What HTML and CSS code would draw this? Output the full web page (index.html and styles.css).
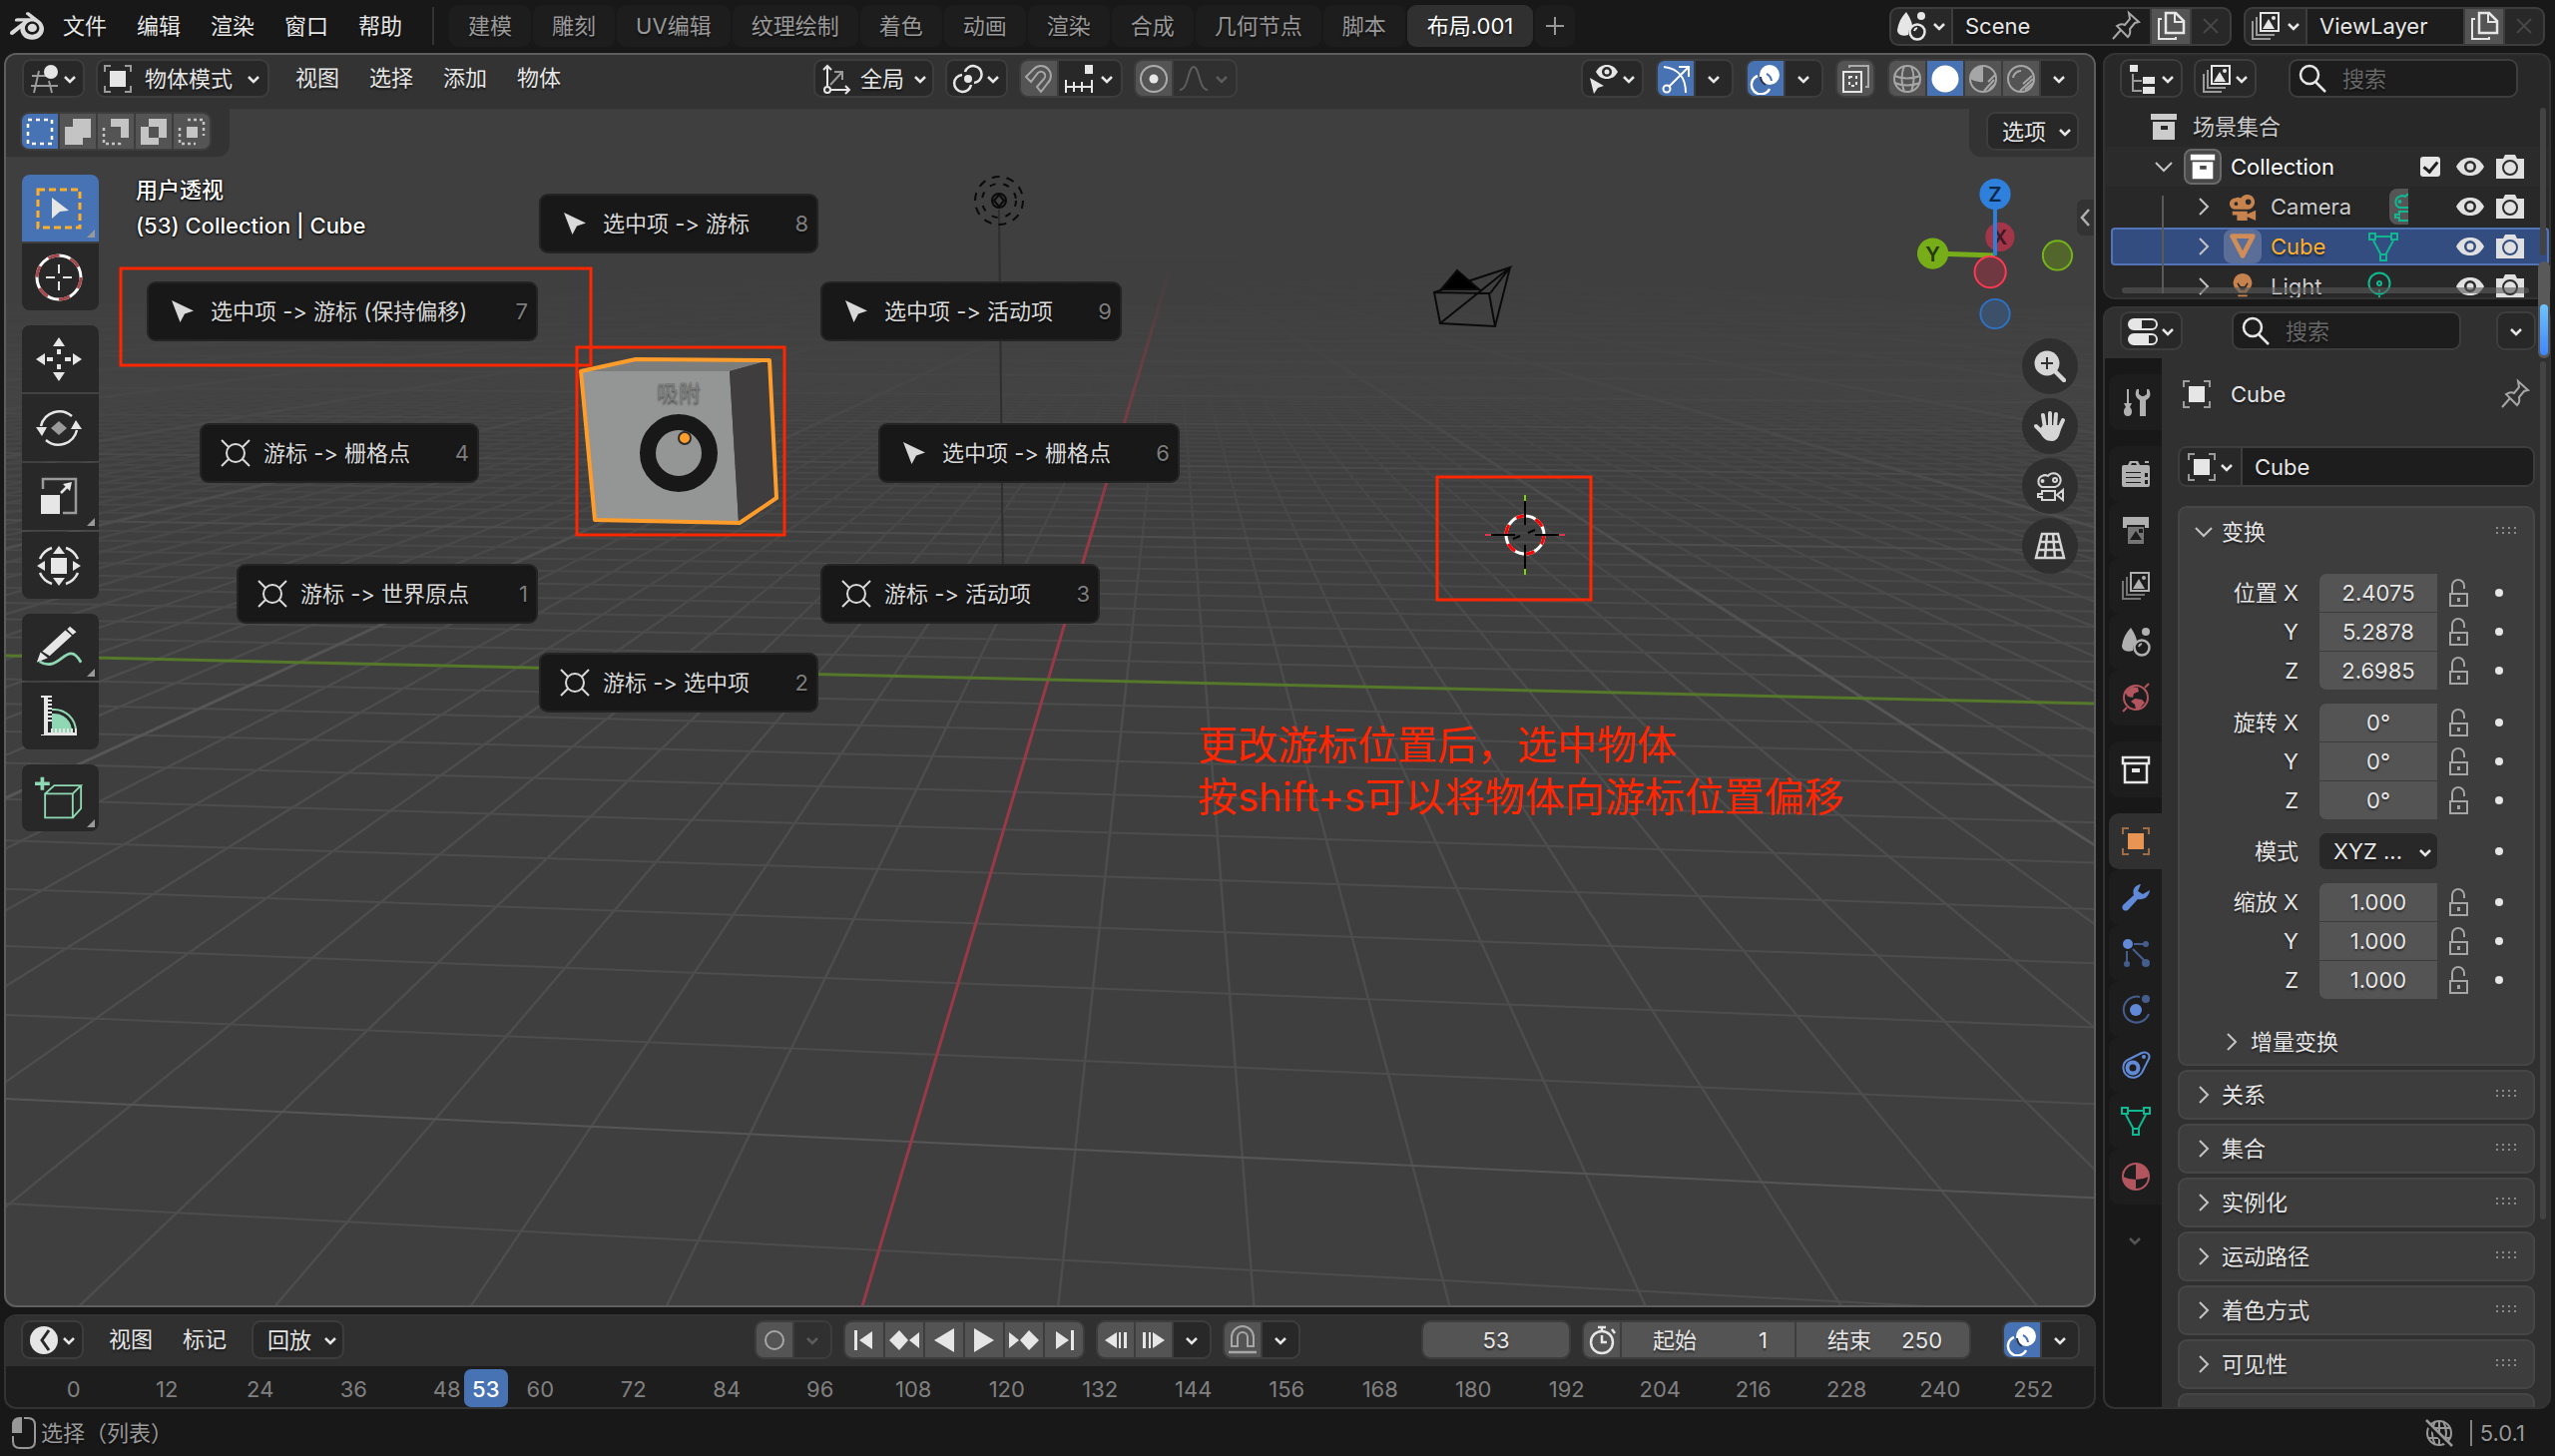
FILE: index.html
```html
<!DOCTYPE html>
<html lang="zh-CN">
<head>
<meta charset="utf-8">
<title>Blender</title>
<link rel="stylesheet" href="styles.css">
</head>
<body>
<svg class="sprite" aria-hidden="true">
  <symbol id="logo" viewBox="0 0 24 24"><path fill="currentColor" fill-rule="evenodd" d="M12.51 13.214c.046-.8.438-1.506 1.03-2.006a3.424 3.424 0 0 1 2.212-.79c.85 0 1.631.3 2.211.79.592.5.983 1.206 1.028 2.005.045.823-.285 1.586-.865 2.153a3.389 3.389 0 0 1-2.374.938 3.393 3.393 0 0 1-2.376-.938c-.58-.567-.91-1.33-.865-2.152M7.35 14.831c.006.314.106.922.256 1.398a7.372 7.372 0 0 0 1.593 2.757 8.227 8.227 0 0 0 2.787 2.001 8.947 8.947 0 0 0 3.66.76 8.964 8.964 0 0 0 3.657-.772 8.285 8.285 0 0 0 2.785-2.01 7.428 7.428 0 0 0 1.592-2.762 6.964 6.964 0 0 0 .25-3.074 7.123 7.123 0 0 0-1.016-2.779 7.764 7.764 0 0 0-1.852-2.043h.002L13.566 2.55l-.02-.015c-.492-.378-1.319-.376-1.86.002-.547.382-.609 1.015-.123 1.415l-.001.001 3.126 2.543-9.53.01h-.013c-.788.001-1.545.518-1.695 1.172-.154.665.38 1.217 1.2 1.22V8.9l4.83-.01-8.62 6.617-.034.025c-.813.622-1.075 1.658-.563 2.315.52.667 1.625.668 2.447.004L7.414 14s-.069.52-.063.831zm12.09 1.741c-.97.988-2.326 1.548-3.795 1.55-1.47.004-2.827-.552-3.797-1.538a4.51 4.51 0 0 1-1.036-1.622 4.282 4.282 0 0 1 .282-3.519 4.702 4.702 0 0 1 1.153-1.371c.942-.768 2.141-1.183 3.396-1.185 1.256-.002 2.455.41 3.398 1.175.48.391.87.854 1.152 1.367a4.28 4.28 0 0 1 .522 1.706 4.236 4.236 0 0 1-.239 1.811 4.54 4.54 0 0 1-1.035 1.626"/></symbol>
  <symbol id="down" viewBox="0 0 16 16"><path class="s3" d="M3 6l5 5 5-5"/></symbol>
  <symbol id="fold-open" viewBox="0 0 20 20"><path class="s" d="M2 6l8 8 8-8"/></symbol>
  <symbol id="fold-shut" viewBox="0 0 20 20"><path class="s" d="M6 2l8 8-8 8"/></symbol>
  <symbol id="left" viewBox="0 0 16 24"><path class="s3" d="M12 4L5 12l7 8"/></symbol>
  <symbol id="cross" viewBox="0 0 32 32"><path class="s" d="M9 9l14 14M23 9L9 23"/></symbol>
  <symbol id="plus" viewBox="0 0 32 32"><path class="s" d="M16 7v18M7 16h18"/></symbol>
  <symbol id="view3d" viewBox="0 0 32 32"><circle cx="22" cy="9" r="7" class="f"/><path class="s dim" d="M3 13h10M2 23h27M10 8L5 30M20 18l3 12M5 13h12"/></symbol>
  <symbol id="object" viewBox="0 0 32 32"><path class="f" d="M8 8h16v16H8z"/><path class="s dim" d="M3 9V3h6M23 3h6v6M29 23v6h-6M9 29H3v-6"/></symbol>
  <symbol id="axes" viewBox="0 0 32 32"><path class="s" d="M7 23V3M3 7l4-4 4 4M10 27h19M25 23l4 4-4 4"/><circle cx="7" cy="27" r="3" class="s"/><path class="s dim" d="M10 22L22 9M14 9h8v8"/></symbol>
  <symbol id="pivot" viewBox="0 0 32 32"><circle cx="16" cy="16" r="4" class="f"/><path class="s3" d="M13 9a8.500 8.500 0 1 1 9 11M10 12a8.500 8.500 0 1 0 9 10"/></symbol>
  <symbol id="magnet" viewBox="0 0 32 32"><path class="s" d="M3 14L11 6a9 9 0 0 1 14 14l-7 9-4-5 7-8a4 4 0 0 0-6-6l-7 9z"/></symbol>
  <symbol id="increment" viewBox="0 0 32 32"><path class="f" d="M22 2h8v9h-8z"/><path class="s" d="M3 17v13M3 24h26M11 19v10M19 19v10M29 17v13"/></symbol>
  <symbol id="propedit" viewBox="0 0 32 32"><circle cx="16" cy="16" r="13" class="s dim"/><circle cx="16" cy="16" r="4.500" class="f"/></symbol>
  <symbol id="falloff" viewBox="0 0 32 32"><path class="s" d="M2 27c9 0 8-23 14-23s5 23 14 23"/></symbol>
  <symbol id="visible" viewBox="0 0 32 32"><path class="f" fill-rule="evenodd" d="M8 9c3-5 6-7 11-7s8 2 11 7c-3 5-6 7-11 7S11 14 8 9zm11-5a5 5 0 1 0 0 10 5 5 0 0 0 0-10z"/><circle cx="19" cy="9" r="2.500" class="f"/><path class="f" d="M2 15l14 8-6 2-4 6z"/></symbol>
  <symbol id="gizmo" viewBox="0 0 32 32"><path class="s" d="M4 4c15 2 22 10 22 26M9 24L28 5M19 4h10v10"/><circle cx="7" cy="26" r="3.500" class="s"/></symbol>
  <symbol id="overlay" viewBox="0 0 32 32"><circle cx="20" cy="12" r="10" class="f"/><path class="s3" d="M8 13a9.500 9.500 0 1 0 12 13"/><path d="M16 22a10 10 0 0 1-5-8" stroke="#28334a" stroke-width="2" fill="none"/><path d="M17 11a9 9 0 0 1 5 7" stroke="#4772b3" stroke-width="2" fill="none"/></symbol>
  <symbol id="xray" viewBox="0 0 32 32"><path class="s" d="M4 9h18v20H4z"/><path class="s dim" d="M10 5V3h19v21h-3"/><path class="s" stroke-dasharray="3 3" d="M10 14h7v9h-7z"/></symbol>
  <symbol id="wire" viewBox="0 0 32 32"><g class="s"><circle cx="16" cy="16" r="13"/><path d="M3 13q13 5 26 0M3 20q13 5 26 0M13 3q-5 13 0 26M20 3q5 13 0 26"/></g></symbol>
  <symbol id="solid" viewBox="0 0 32 32"><circle cx="16" cy="16" r="13.500" class="f"/></symbol>
  <symbol id="matprev" viewBox="0 0 32 32"><circle cx="16" cy="16" r="13" class="s"/><path class="f" d="M16 3a13 13 0 0 0-13 13q6 4 13 3z"/><path class="s" d="M17 28l10-11M22 27l6-6M21 19l7-7"/></symbol>
  <symbol id="rendered" viewBox="0 0 32 32"><circle cx="16" cy="16" r="13" class="s"/><path class="s" d="M8 15a8 8 0 0 1 8-7"/><path class="s" d="M15 28l13-12M20 27l8-7M18 21l9-8"/></symbol>
  <symbol id="scene" viewBox="0 0 32 32"><path class="f" d="M11 2c4 6 6 11 6 14a11 11 0 0 0-4 9c-7 2-11-1-11-5C3 13 6 7 11 2z"/><circle cx="26" cy="6" r="4" class="f"/><circle cx="22" cy="22" r="7.500" class="s3"/><path class="s" d="M19 21a4 4 0 0 1 3-3"/></symbol>
  <symbol id="layers" viewBox="0 0 32 32"><path class="s" d="M11 3h18v18H11z"/><path class="f" d="M13 19l6-10 6 10z"/><circle cx="24" cy="8" r="2" class="f"/><path class="s dim" d="M7 7v18h18M3 11v18h18"/></symbol>
  <symbol id="pin" viewBox="0 0 32 32"><path class="s" d="M19 3l10 9-4 1-5 6c1 4 0 6-2 8L7 16c3-2 6-2 8-1l5-6zM11 20l-8 9"/></symbol>
  <symbol id="dup" viewBox="0 0 32 32"><path class="s3" d="M11 3h10l8 8v12H11z"/><path class="s" d="M20 4v8h8M7 9H4v20h17v-2"/></symbol>
  <symbol id="outliner" viewBox="0 0 32 32"><path class="f" d="M3 2h8v7H3zM16 14h12v7H16zM16 24h12v7H16z"/><path class="s dim" d="M6 11v17h9M6 18h9"/></symbol>
  <symbol id="search" viewBox="0 0 32 32"><circle cx="13" cy="12" r="9" class="s3"/><path class="s3" d="M19 19l10 10"/></symbol>
  <symbol id="box" viewBox="0 0 32 32"><path class="f" fill-rule="evenodd" d="M3 3h26v6H3zM5 11h22v18H5zm8 4v4h7v-4z"/></symbol>
  <symbol id="box-line" viewBox="0 0 32 32"><path class="s3" d="M3 4h26v6H3zM5 10v19h22V10"/><path class="f" d="M12 15h8v4h-8z"/></symbol>
  <symbol id="eye" viewBox="0 0 32 32"><path class="f" fill-rule="evenodd" d="M2 16C6 9 10 7 16 7s10 2 14 9c-4 7-8 9-14 9S6 23 2 16zm14-6a6 6 0 1 0 0 12 6 6 0 0 0 0-12z"/><circle cx="16" cy="16" r="3.500" class="f"/></symbol>
  <symbol id="photo" viewBox="0 0 32 32"><path class="f" fill-rule="evenodd" d="M2 8h7l2-4h10l2 4h7v20H2zm14 1a8 8 0 1 0 0 16 8 8 0 0 0 0-16zm0 2a6 6 0 1 1 0 12 6 6 0 0 1 0-12z"/><circle cx="16" cy="17" r="4" class="f"/></symbol>
  <symbol id="camera" viewBox="0 0 32 32"><path class="f" fill-rule="evenodd" d="M8 7a6 6 0 0 1 6 0 8 8 0 1 1 8 12H8A6 6 0 0 1 8 7zm1 4a2 2 0 1 0 0 4 2 2 0 0 0 0-4zm13-3a3 3 0 1 0 0 6 3 3 0 0 0 0-6zM5 21h16v3l9-4v11l-9-4v4H10v-6H5z"/></symbol>
  <symbol id="camera-line" viewBox="0 0 32 32"><g class="s"><path d="M8 6a6 6 0 0 1 6 0 7 7 0 1 1 7 11H8A6 6 0 0 1 8 6z"/><circle cx="8.500" cy="11" r="1"/><circle cx="21" cy="10" r="2"/><path d="M4 24h4v-3h13v9H8v-3H4zM29 20v10l-6-5z"/></g></symbol>
  <symbol id="tri" viewBox="0 0 32 32"><path fill="none" stroke="currentColor" stroke-width="5" stroke-linejoin="round" d="M5 5h22L16 26z"/></symbol>
  <symbol id="mesh" viewBox="0 0 32 32"><path class="s" d="M9 6h14M6 10l8 15M26 10l-8 15M2 3h6v6H2zM24 3h6v6h-6zM13 24h6v6h-6z"/></symbol>
  <symbol id="bulb" viewBox="0 0 32 32"><path class="f" fill-rule="evenodd" d="M16 2a10 10 0 0 0-7 17l3 4h8l3-4A10 10 0 0 0 16 2zm-5 10l3 4h4l3-4 1 1-4 7h-4l-4-7z"/><path class="f" d="M11 25h10v2H11zM12 29h8v2h-8z"/></symbol>
  <symbol id="lightdata" viewBox="0 0 32 32"><circle cx="16" cy="13" r="10.500" class="s"/><circle cx="16" cy="13" r="2" class="s"/><path class="s" stroke-dasharray="3 3" d="M16 19v12"/></symbol>
  <symbol id="props" viewBox="0 0 32 32"><path fill-rule="evenodd" class="f" d="M7 3h18a6 6 0 0 1 0 12H7A6 6 0 0 1 7 3zm8 2v8h10a4 4 0 0 0 0-8zM7 18h18a6 6 0 0 1 0 12H7a6 6 0 0 1 0-12zm15 2v8h3a4 4 0 0 0 0-8z"/></symbol>
  <symbol id="tool" viewBox="0 0 32 32"><path class="f" d="M7 3h2v14H7zM4 17h8l-2 4c3 2 3 9-2 9s-5-7-2-9zM17 3c-3 6 0 9 3 11v16h6V14c4-2 6-5 3-11l-2 0v5l-3 2h-2l-3-2V3z"/></symbol>
  <symbol id="render" viewBox="0 0 32 32"><path class="f" fill-rule="evenodd" d="M4 7h4l2-4h8l2 4h8q2 0 2 2v18q0 2-2 2H4q-2 0-2-2V9q0-2 2-2zm7 0h6l-1-2h-4zM6 14v1h15v-1zm0 5v1h15v-1zm0 5v1h15v-1zm19-9v4h3v-4zm0 7v4h3v-4z"/><path class="f" d="M25 3h4v2h-4z"/></symbol>
  <symbol id="output" viewBox="0 0 32 32"><path class="f" d="M3 3h26v11h-4v-3H7v3H3z"/><path class="f dim" fill-rule="evenodd" d="M8 13h16v17H8zm2 13h12l-6-9zm9-11v4h4v-4z"/></symbol>
  <symbol id="world" viewBox="0 0 32 32"><circle cx="16" cy="16" r="12" class="s"/><path class="s" d="M25 6l4-4M3 30l4-4"/><path class="f" d="M6 10l6-5 6 1 1 4-5 2-1 4-5-1-2-3zM15 17l7 1 3 3-6 7-3 0-1-5-4-3z"/></symbol>
  <symbol id="wrench" viewBox="0 0 32 32"><path class="f" d="M21 3c-6 1-9 6-7 11L3 24c-2 3 1 7 5 5l10-11c6 1 11-2 12-9l-7 4-5-3z"/></symbol>
  <symbol id="particles" viewBox="0 0 32 32"><circle cx="8" cy="7" r="5" class="f"/><g class="dim"><circle cx="26" cy="7" r="3" class="f"/><circle cx="26" cy="26" r="4" class="f"/><circle cx="7" cy="27" r="3" class="f"/><path class="s" d="M14 7h10M13 12l12 12M7 14v11"/></g></symbol>
  <symbol id="physics" viewBox="0 0 32 32"><circle cx="16" cy="17" r="6" class="f"/><g class="dim"><circle cx="26" cy="6" r="4" class="f"/><path class="s" d="M20 4a13 13 0 1 0 9 17"/></g></symbol>
  <symbol id="constraint" viewBox="0 0 32 32"><path class="s" d="M22 4c5-2 9 2 7 6l-7 14C15 34 0 27 4 15c1-2 3-4 6-5z"/><circle cx="13" cy="19" r="5.500" fill="none" stroke="currentColor" stroke-width="4"/><circle cx="24" cy="8" r="2" class="f"/></symbol>
  <symbol id="material" viewBox="0 0 32 32"><circle cx="16" cy="16" r="13" class="s"/><path class="f" d="M16 3a13 13 0 0 1 13 13q-6 3-13 3zM3 16q6 3 13 3v10A13 13 0 0 1 3 16z"/></symbol>
  <symbol id="lock" viewBox="0 0 24 32"><path class="s" d="M4 17h17v12H4zM6 17V9a6 6 0 0 1 12 0v3"/><path class="f" d="M11 21h3v4h-3z"/></symbol>
  <symbol id="grip" viewBox="0 0 24 10"><path class="f" d="M1 0h2v2H1zM7 0h2v2H7zM13 0h2v2h-2zM19 0h2v2h-2zM1 5h2v2H1zM7 5h2v2H7zM13 5h2v2h-2zM19 5h2v2h-2z"/></symbol>
  <symbol id="pie-arrow" viewBox="0 0 32 32"><path class="f" d="M5 5l22 10.500L18 18.500 13.500 27z"/></symbol>
  <symbol id="pie-cursor" viewBox="0 0 32 32"><circle cx="16" cy="16" r="9" class="s"/><path class="s" d="M2 3l7 7M30 3l-7 7M2 29l7-7M30 29l-7-7"/></symbol>
  <symbol id="clock" viewBox="0 0 32 32"><circle cx="16" cy="16" r="14" class="f"/><path d="M21 6l-7 10 7 10" fill="none" stroke="#282828" stroke-width="3"/></symbol>
  <symbol id="record" viewBox="0 0 32 32"><circle cx="16" cy="16" r="9" class="s"/></symbol>
  <symbol id="first" viewBox="0 0 32 32"><path class="f" d="M6 6h3v20H6zM24 7v18L11 16z"/></symbol>
  <symbol id="last" viewBox="0 0 32 32"><path class="f" d="M23 6h3v20h-3zM8 7v18l13-9z"/></symbol>
  <symbol id="prevkey" viewBox="0 0 32 32"><path class="f" d="M1 16l10-10 9 10-9 10zM31 8v16l-10-8z"/></symbol>
  <symbol id="nextkey" viewBox="0 0 32 32"><path class="f" d="M31 16L21 6l-9 10 9 10zM1 8v16l10-8z"/></symbol>
  <symbol id="playback" viewBox="0 0 32 32"><path class="f" d="M26 4v24L6 16z"/></symbol>
  <symbol id="play" viewBox="0 0 32 32"><path class="f" d="M6 4v24l20-12z"/></symbol>
  <symbol id="stepback" viewBox="0 0 32 32"><path class="f" d="M5 16L17 8v16zM19 8h2v16h-2zM24 8h3v16h-3z"/></symbol>
  <symbol id="stepfwd" viewBox="0 0 32 32"><path class="f" d="M27 16L15 8v16zM11 8h2v16h-2zM5 8h3v16H5z"/></symbol>
  <symbol id="snapline" viewBox="0 0 32 32"><path class="s" d="M5 22V13a11 11 0 0 1 22 0v9h-6v-9a5 5 0 0 0-10 0v9z"/><path class="s3" d="M2 28h28"/></symbol>
  <symbol id="stopwatch" viewBox="0 0 32 32"><circle cx="16" cy="18" r="11" class="s3"/><path class="s3" d="M16 11v7h5M12 3h8M16 3v4M26 5l3 4"/></symbol>
  <symbol id="mouse" viewBox="0 0 24 34"><path class="s" d="M12 2h4q7 0 7 7v16q0 7-7 7H8q-7 0-7-7v-5"/><path class="f" d="M10 1v16H0V9q0-8 8-8z"/></symbol>
  <symbol id="offline" viewBox="0 0 32 32"><g class="s"><circle cx="16" cy="16" r="12"/><path d="M5 11h22M5 21h22M16 4v24M12 4q-6 12 0 24M20 4q6 12 0 24"/></g><path d="M1 4l28 28" stroke="#181818" stroke-width="4"/><path class="s3" d="M3 3l26 26"/></symbol>
  <symbol id="sel-new" viewBox="0 0 32 32"><path class="s3" stroke-dasharray="4 4" d="M4 4h24v24H4z"/></symbol>
  <symbol id="sel-add" viewBox="0 0 32 32"><path class="f" d="M11 3h18v19h-8v7H3V11h8z"/></symbol>
  <symbol id="sel-sub" viewBox="0 0 32 32"><path class="f" d="M11 3h18v19h-8V11H11z"/><path class="s3" stroke-dasharray="3 3" d="M4 12v16h16v-4"/></symbol>
  <symbol id="sel-inv" viewBox="0 0 32 32"><path class="f" fill-rule="evenodd" d="M11 3h18v19h-8v7H3V11h8zm0 8v11h10V11z"/></symbol>
  <symbol id="sel-int" viewBox="0 0 32 32"><path class="f" d="M11 11h11v11H11z"/><path class="s3" stroke-dasharray="3 3" d="M12 4h16v16M4 12v16h16"/></symbol>
  <symbol id="t-select" viewBox="0 0 48 48"><path fill="none" stroke="#ffaf29" stroke-width="3" stroke-dasharray="7 4" d="M3 5h42v38H3z"/><path class="f" d="M17 13l17 13-9 1-8 7z"/></symbol>
  <symbol id="t-cursor" viewBox="0 0 48 48"><circle cx="24" cy="24" r="22" fill="none" stroke="#fff" stroke-width="3"/><circle cx="24" cy="24" r="22" fill="none" stroke="#a3484c" stroke-width="3" stroke-dasharray="11.500 11.500"/><path class="s" d="M24 11v9M24 28v9M11 24h9M28 24h9"/></symbol>
  <symbol id="t-move" viewBox="0 0 48 48"><path class="f" d="M24 2l6 9H18zM24 46l6-9H18zM1 24l9-6v12zM47 24l-9-6v12zM22 14h4v5h-4zM22 29h4v5h-4zM12 22h6v4h-6zM30 22h6v4h-6z"/></symbol>
  <symbol id="t-rotate" viewBox="0 0 48 48"><path class="f dim" d="M24 17l8 7-8 7-8-7z"/><path class="s3" d="M6 22a19 19 0 0 1 31-10M42 26a19 19 0 0 1-31 10"/><path class="f" d="M1 23h11l-5 9zM47 25H36l5-9z"/></symbol>
  <symbol id="t-scale" viewBox="0 0 48 48"><path class="s3 dim" d="M8 16V6h33v34H28"/><path class="f" d="M6 22h19v19H6z"/><path class="s3" d="M26 20l7-7"/><path class="f" d="M37 9l-2 9-7-7z"/></symbol>
  <symbol id="t-transform" viewBox="0 0 48 48"><path class="f" d="M16 16h16v16H16zM24 4l6 8H18zM24 44l6-8H18zM2 24l8-5v10zM46 24l-8-5v10z"/><path class="s3" d="M5 17A20 20 0 0 1 17 6M31 6a20 20 0 0 1 12 11M43 31a20 20 0 0 1-12 11M17 42A20 20 0 0 1 5 31"/></symbol>
  <symbol id="t-annotate" viewBox="0 0 52 48"><path class="f" d="M33 5l7 6-24 22-8-5zM6 29l8 6-12 5zM35 4l3-3 7 6-4 3z"/><path fill="none" stroke="#8fd8b4" stroke-width="3" d="M5 39c22 14 30-26 45 1"/></symbol>
  <symbol id="t-measure" viewBox="0 0 48 48"><path fill="#8fd8b4" d="M17 21a18 18 0 0 1 20 19H17z"/><path fill="none" stroke="#8fd8b4" stroke-width="2" d="M17 17a22 22 0 0 1 24 23"/><path class="f" d="M6 3h11v2h-4v2h4v2h-4v2h4v2h-4v2h4v2h-4v2h4v2h-4v2h4v2h-4v2h4v2h-4v11h3v-4h2v4h2v-4h2v4h2v-4h2v4h2v-4h2v4h2v-4h2v4h2v-4h2v4h2v-4h2v7H6V42h3V5H6z"/></symbol>
  <symbol id="t-cube" viewBox="0 0 52 48"><path fill="#8fd8b4" d="M6 1h4v5h6v4h-6v5H6v-5H0V6h6z"/><path fill="none" stroke="#8fd8b4" stroke-width="2" d="M11 19h30v26H11zM11 19l10-9h29l-9 9M50 10v25l-9 10"/></symbol>
  <symbol id="zoom" viewBox="0 0 32 32"><circle cx="13" cy="13" r="12.500" class="f"/><path d="M22 22l8 8" stroke="currentColor" stroke-width="4.500" stroke-linecap="round"/><path d="M13 7v12M7 13h12" stroke="#2f2f2f" stroke-width="2"/></symbol>
  <symbol id="hand" viewBox="0 0 32 32"><path fill="none" stroke="currentColor" stroke-width="4" stroke-linecap="round" d="M11 18L9 5M16 16V3M21 17l1-13M25 19l4-9M8 22l-6-6"/><path class="f" d="M9 15h16l2 3c-1 6-3 13-9 13S8 28 5 20z"/></symbol>
  <symbol id="persp" viewBox="0 0 32 32"><path class="s3" d="M8 4h16l6 24H2zM6 12h20M4 20h24M13 4l-2 24M19 4l2 24"/></symbol>
</svg>

<header class="topbar">
  <nav class="menus">
    <button class="menu brand" aria-label="Blender"><svg class="ic logo"><use href="#logo"/></svg></button>
    <button class="menu">文件</button><button class="menu">编辑</button><button class="menu">渲染</button><button class="menu">窗口</button><button class="menu">帮助</button>
  </nav>
  <nav class="spaces">
    <button>建模</button><button>雕刻</button><button>UV编辑</button><button>纹理绘制</button><button>着色</button><button>动画</button><button>渲染</button><button>合成</button><button>几何节点</button><button>脚本</button><button class="on">布局.001</button><button class="add" aria-label="添加工作区"><svg class="ic"><use href="#plus"/></svg></button>
  </nav>
  <div class="grp data scene-id">
    <button class="drop" aria-label="场景"><svg class="ic"><use href="#scene"/></svg><svg class="dn"><use href="#down"/></svg></button>
    <input class="name" aria-label="场景名称" value="Scene">
    <button class="ghost" aria-label="固定"><svg class="ic mute"><use href="#pin"/></svg></button>
    <button class="cell lit" aria-label="新建场景"><svg class="ic"><use href="#dup"/></svg></button>
    <button class="cell off" aria-label="删除场景"><svg class="ic"><use href="#cross"/></svg></button>
  </div>
  <div class="grp data layer-id">
    <button class="drop" aria-label="视图层"><svg class="ic"><use href="#layers"/></svg><svg class="dn"><use href="#down"/></svg></button>
    <input class="name" aria-label="视图层名称" value="ViewLayer">
    <button class="cell lit" aria-label="新建视图层"><svg class="ic"><use href="#dup"/></svg></button>
    <button class="cell off" aria-label="删除视图层"><svg class="ic"><use href="#cross"/></svg></button>
  </div>
</header>

<main class="work">
  <div class="left">
    <section class="viewport" aria-label="3D 视图">
      <svg class="scene" viewBox="6 55 2092 1253" preserveAspectRatio="xMidYMid slice" aria-hidden="true">
        <defs>
          <linearGradient id="fade" gradientUnits="userSpaceOnUse" x1="0" y1="262" x2="0" y2="700">
            <stop offset="0" stop-color="#000"/><stop offset=".12" stop-color="#1c1c1c"/><stop offset=".35" stop-color="#666"/><stop offset="1" stop-color="#fff"/>
          </linearGradient>
          <mask id="haze" maskUnits="userSpaceOnUse" x="0" y="0" width="2200" height="1400"><path fill="url(#fade)" d="M0 262h2200v1138H0z"/></mask>
          <linearGradient id="redfade" gradientUnits="userSpaceOnUse" x1="0" y1="262" x2="0" y2="520"><stop offset="0" stop-color="#993847" stop-opacity="0"/><stop offset="1" stop-color="#993847"/></linearGradient>
        </defs>
        <g mask="url(#haze)"><g id="minor" stroke="#4d4d4d"></g><g id="major" stroke="#565656"></g></g>
        <path d="M1175 260L864 1309" stroke="url(#redfade)" stroke-width="3"/>
        <path d="M4 657L2100 705" stroke="#55782a" stroke-width="3"/>
        <g fill="none" stroke="#0a0a0a" stroke-width="2">
          <path stroke="#2f2f2f" d="M1001 210L1005 580"/>
          <circle cx="1001" cy="201" r="24" stroke-dasharray="8 7"/><circle cx="1001" cy="201" r="17" stroke-dasharray="6 8"/><circle cx="1001" cy="201" r="7"/><path d="M1001 195l5 6-5 6-5-6z"/>
          <path d="M1437 293l55 1 6 33-55-3zM1437 293l76-25-20 26M1513 268l-15 59M1513 268l-70 56"/>
          <path fill="#000" d="M1460 271l22 19h-38z"/>
        </g>
        <path fill="#949695" d="M582 372h149l9 151-144-2z"/><path fill="#7c7d7d" d="M582 372l55-12 134 1-40 11z"/><path fill="#403d3e" d="M731 372l40-11 7 138-38 24z"/>
        <path fill="none" stroke="#ff9c2a" stroke-width="4" stroke-linejoin="round" d="M582 372l55-12 134 1 7 138-37 25-145-3z"/>
        <circle cx="680" cy="454" r="31" fill="none" stroke="#181818" stroke-width="16"/>
        <circle cx="686" cy="439" r="6" fill="#ff9c2a" stroke="#2b2b2b" stroke-width="2"/>
        <circle cx="1528" cy="536" r="19" fill="none" stroke="#fff" stroke-width="3"/><circle cx="1528" cy="536" r="19" fill="none" stroke="#f00" stroke-width="3" stroke-dasharray="10 10"/>
        <g fill="none" stroke="#000" stroke-width="2"><path d="M1528 501v25M1528 546v25M1494 536h24M1538 536h24M1516 540l7-3M1531 534l7-3"/><path stroke="#7fd00e" d="M1528 496v6M1528 570v6"/><path stroke="#d8374c" d="M1488 536h6M1562 536h6"/></g>
        <g fill="none" stroke="#ff2600" stroke-width="3"><path d="M121 269h471v97H121z"/><path d="M578 348h208v188H578z"/><path d="M1440 478h154v123h-154z"/></g>
      </svg>

      <header class="vhead">
        <div class="bar">
          <button class="btn drop" aria-label="编辑器类型"><svg class="ic"><use href="#view3d"/></svg><svg class="dn"><use href="#down"/></svg></button>
          <button class="btn mode"><svg class="ic"><use href="#object"/></svg><span>物体模式</span><svg class="dn"><use href="#down"/></svg></button>
          <nav class="menus"><button class="menu">视图</button><button class="menu">选择</button><button class="menu">添加</button><button class="menu">物体</button></nav>
        </div>
        <div class="bar middle">
          <button class="btn orient"><svg class="ic"><use href="#axes"/></svg><span>全局</span><svg class="dn"><use href="#down"/></svg></button>
          <button class="btn drop" aria-label="轴心点"><svg class="ic"><use href="#pivot"/></svg><svg class="dn"><use href="#down"/></svg></button>
          <div class="grp"><button class="cell lit" aria-label="吸附"><svg class="ic mute"><use href="#magnet"/></svg></button><button class="drop" aria-label="吸附选项"><svg class="ic"><use href="#increment"/></svg><svg class="dn"><use href="#down"/></svg></button></div>
          <div class="grp"><button class="cell lit" aria-label="比例编辑"><svg class="ic"><use href="#propedit"/></svg></button><button class="drop faint" aria-label="衰减"><svg class="ic"><use href="#falloff"/></svg><svg class="dn"><use href="#down"/></svg></button></div>
        </div>
        <div class="bar shading">
          <button class="btn drop" aria-label="可见性"><svg class="ic"><use href="#visible"/></svg><svg class="dn"><use href="#down"/></svg></button>
          <div class="grp"><button class="cell on" aria-label="显示Gizmo"><svg class="ic"><use href="#gizmo"/></svg></button><button class="cell" aria-label="Gizmo选项"><svg class="dn"><use href="#down"/></svg></button></div>
          <div class="grp"><button class="cell on" aria-label="显示叠加层"><svg class="ic"><use href="#overlay"/></svg></button><button class="cell" aria-label="叠加层选项"><svg class="dn"><use href="#down"/></svg></button></div>
          <div class="grp"><button class="cell lit" aria-label="透视模式"><svg class="ic"><use href="#xray"/></svg></button></div>
          <div class="grp"><button class="cell lit" aria-label="线框"><svg class="ic mute"><use href="#wire"/></svg></button><button class="cell on" aria-label="实体"><svg class="ic"><use href="#solid"/></svg></button><button class="cell lit" aria-label="材质预览"><svg class="ic mute"><use href="#matprev"/></svg></button><button class="cell lit" aria-label="渲染"><svg class="ic mute"><use href="#rendered"/></svg></button><button class="cell" aria-label="着色选项"><svg class="dn"><use href="#down"/></svg></button></div>
        </div>
      </header>

      <div class="vsub">
        <div class="notch"><div class="grp"><button class="cell on" aria-label="新建选区"><svg class="ic"><use href="#sel-new"/></svg></button><button class="cell lit" aria-label="扩展"><svg class="ic"><use href="#sel-add"/></svg></button><button class="cell lit" aria-label="减去"><svg class="ic"><use href="#sel-sub"/></svg></button><button class="cell lit" aria-label="反转"><svg class="ic"><use href="#sel-inv"/></svg></button><button class="cell lit" aria-label="交集"><svg class="ic"><use href="#sel-int"/></svg></button></div></div>
        <div class="notch right"><button class="btn option"><span>选项</span><svg class="dn"><use href="#down"/></svg></button></div>
      </div>

      <div class="vbody">
        <div class="tools">
          <div class="set"><button class="on more" aria-label="框选"><svg><use href="#t-select"/></svg></button><button aria-label="游标"><svg><use href="#t-cursor"/></svg></button></div>
          <div class="set"><button aria-label="移动"><svg><use href="#t-move"/></svg></button><button aria-label="旋转"><svg><use href="#t-rotate"/></svg></button><button class="more" aria-label="缩放"><svg><use href="#t-scale"/></svg></button><button aria-label="变换"><svg><use href="#t-transform"/></svg></button></div>
          <div class="set"><button class="more" aria-label="标注"><svg><use href="#t-annotate"/></svg></button><button aria-label="测量"><svg><use href="#t-measure"/></svg></button></div>
          <div class="set"><button class="more" aria-label="添加立方体"><svg><use href="#t-cube"/></svg></button></div>
        </div>
        <p class="info">用户透视<br>(53) Collection | Cube</p>
        <div class="nav">
          <svg class="orbit" viewBox="1918 175 164 164" role="img" aria-label="视图方向">
            <circle cx="2004" cy="239" r="15" fill="#a33549"/><text x="2004" y="247" fill="#401820">X</text>
            <path d="M1935 256l64 2" stroke="#76ad18" stroke-width="5"/><path d="M1999 195v63" stroke="#2e80dc" stroke-width="4"/>
            <circle cx="1999" cy="195" r="16" fill="#2e80dc"/><text x="1999" y="203" fill="#0d2747">Z</text>
            <circle cx="1935" cy="256" r="16" fill="#76ad18"/><text x="1935" y="264" fill="#25380a">Y</text>
            <circle cx="1994" cy="275" r="16" fill="#703841" stroke="#ff3853" stroke-width="2"/>
            <circle cx="2063" cy="258" r="15" fill="#52662c" stroke="#76b519" stroke-width="2"/>
            <circle cx="1999" cy="318" r="15" fill="#3d5069" stroke="#2e72c4" stroke-width="2"/>
          </svg>
          <button aria-label="缩放视图"><svg class="ic"><use href="#zoom"/></svg></button>
          <button aria-label="平移视图"><svg class="ic"><use href="#hand"/></svg></button>
          <button aria-label="摄像机视图"><svg class="ic"><use href="#camera-line"/></svg></button>
          <button aria-label="透视/正交"><svg class="ic"><use href="#persp"/></svg></button>
        </div>
      </div>
      <button class="side" aria-label="侧栏"><svg><use href="#left"/></svg></button>

      <div class="pie">
        <span class="title">吸附</span>
        <button class="p8"><svg class="ic"><use href="#pie-arrow"/></svg>选中项 -&gt; 游标<kbd>8</kbd></button>
        <button class="p7"><svg class="ic"><use href="#pie-arrow"/></svg>选中项 -&gt; 游标 (保持偏移)<kbd>7</kbd></button>
        <button class="p9"><svg class="ic"><use href="#pie-arrow"/></svg>选中项 -&gt; 活动项<kbd>9</kbd></button>
        <button class="p4"><svg class="ic"><use href="#pie-cursor"/></svg>游标 -&gt; 栅格点<kbd>4</kbd></button>
        <button class="p6"><svg class="ic"><use href="#pie-arrow"/></svg>选中项 -&gt; 栅格点<kbd>6</kbd></button>
        <button class="p1"><svg class="ic"><use href="#pie-cursor"/></svg>游标 -&gt; 世界原点<kbd>1</kbd></button>
        <button class="p3"><svg class="ic"><use href="#pie-cursor"/></svg>游标 -&gt; 活动项<kbd>3</kbd></button>
        <button class="p2"><svg class="ic"><use href="#pie-cursor"/></svg>游标 -&gt; 选中项<kbd>2</kbd></button>
      </div>
      <p class="note">更改游标位置后，选中物体<br>按shift+s可以将物体向游标位置偏移</p>
    </section>

    <section class="timeline" aria-label="时间线">
      <header class="thead">
        <button class="btn drop" aria-label="编辑器类型"><svg class="ic"><use href="#clock"/></svg><svg class="dn"><use href="#down"/></svg></button>
        <nav class="menus"><button class="menu">视图</button><button class="menu">标记</button></nav>
        <button class="btn option"><span>回放</span><svg class="dn"><use href="#down"/></svg></button>
        <i class="gap-a"></i>
        <div class="grp"><button class="cell lit" aria-label="自动插帧"><svg class="ic mute"><use href="#record"/></svg></button><button class="cell faint" aria-label="插帧选项"><svg class="dn"><use href="#down"/></svg></button></div>
        <div class="grp wide"><button class="cell lit" aria-label="起始帧"><svg class="ic"><use href="#first"/></svg></button><button class="cell lit" aria-label="上一关键帧"><svg class="ic"><use href="#prevkey"/></svg></button><button class="cell lit" aria-label="倒放"><svg class="ic"><use href="#playback"/></svg></button><button class="cell lit" aria-label="播放"><svg class="ic"><use href="#play"/></svg></button><button class="cell lit" aria-label="下一关键帧"><svg class="ic"><use href="#nextkey"/></svg></button><button class="cell lit" aria-label="结束帧"><svg class="ic"><use href="#last"/></svg></button></div>
        <div class="grp"><button class="cell lit" aria-label="后退"><svg class="ic"><use href="#stepback"/></svg></button><button class="cell lit" aria-label="前进"><svg class="ic"><use href="#stepfwd"/></svg></button><button class="cell" aria-label="步进选项"><svg class="dn"><use href="#down"/></svg></button></div>
        <div class="grp"><button class="cell lit" aria-label="吸附"><svg class="ic mute"><use href="#snapline"/></svg></button><button class="cell" aria-label="吸附选项"><svg class="dn"><use href="#down"/></svg></button></div>
        <i class="gap-b"></i>
        <div class="grp"><input class="frame" aria-label="当前帧" value="53"></div>
        <div class="grp"><button class="cell lit" aria-label="预览范围"><svg class="ic"><use href="#stopwatch"/></svg></button><label class="range">起始<input value="1"></label><label class="range">结束<input value="250"></label></div>
        <i class="gap-c"></i>
        <div class="grp"><button class="cell on" aria-label="叠加层"><svg class="ic"><use href="#overlay"/></svg></button><button class="cell" aria-label="叠加层选项"><svg class="dn"><use href="#down"/></svg></button></div>
      </header>
      <div class="ruler">
        <div class="ticks"><span>0</span><span>12</span><span>24</span><span>36</span><span>48</span><span>60</span><span>72</span><span>84</span><span>96</span><span>108</span><span>120</span><span>132</span><span>144</span><span>156</span><span>168</span><span>180</span><span>192</span><span>204</span><span>216</span><span>228</span><span>240</span><span>252</span><b class="head" style="left:22.350%">53</b></div>
      </div>
    </section>
  </div>

  <aside class="right">
    <section class="outliner" aria-label="大纲视图">
      <header class="ohead">
        <button class="btn drop" aria-label="编辑器类型"><svg class="ic"><use href="#outliner"/></svg><svg class="dn"><use href="#down"/></svg></button>
        <button class="btn drop" aria-label="显示模式"><svg class="ic"><use href="#layers"/></svg><svg class="dn"><use href="#down"/></svg></button>
        <label class="search"><svg class="ic"><use href="#search"/></svg><input type="search" placeholder="搜索" aria-label="搜索"></label>
      </header>
      <ul class="tree">
        <li class="row root"><svg class="ic"><use href="#box"/></svg><span>场景集合</span></li>
        <li class="row coll"><svg class="fold"><use href="#fold-open"/></svg><span class="tag lined"><svg class="ic"><use href="#box"/></svg></span><span>Collection</span><span class="toggles"><input type="checkbox" checked aria-label="启用集合"><svg class="ic"><use href="#eye"/></svg><svg class="ic"><use href="#photo"/></svg></span></li>
        <li class="row item"><svg class="fold"><use href="#fold-shut"/></svg><span class="tag"><svg class="ic obj"><use href="#camera"/></svg></span><span>Camera</span><span class="clip"><svg class="ic geo"><use href="#camera-line"/></svg></span><span class="toggles"><svg class="ic"><use href="#eye"/></svg><svg class="ic"><use href="#photo"/></svg></span></li>
        <li class="row item picked"><svg class="fold"><use href="#fold-shut"/></svg><span class="tag filled"><svg class="ic obj"><use href="#tri"/></svg></span><span>Cube</span><svg class="ic geo data-ic"><use href="#mesh"/></svg><span class="toggles"><svg class="ic"><use href="#eye"/></svg><svg class="ic"><use href="#photo"/></svg></span></li>
        <li class="row item"><svg class="fold"><use href="#fold-shut"/></svg><span class="tag"><svg class="ic obj"><use href="#bulb"/></svg></span><span>Light</span><svg class="ic geo data-ic"><use href="#lightdata"/></svg><span class="toggles"><svg class="ic"><use href="#eye"/></svg><svg class="ic"><use href="#photo"/></svg></span></li>
      </ul>
      <i class="branch"></i><i class="hscroll"></i><i class="vscroll"></i>
    </section>

    <section class="props" aria-label="属性">
      <header class="phead">
        <button class="btn drop" aria-label="编辑器类型"><svg class="ic"><use href="#props"/></svg><svg class="dn"><use href="#down"/></svg></button>
        <label class="search"><svg class="ic"><use href="#search"/></svg><input type="search" placeholder="搜索" aria-label="搜索"></label>
        <button class="btn solo" aria-label="选项"><svg class="dn"><use href="#down"/></svg></button>
      </header>
      <div class="pbody">
        <nav class="tabs">
          <div><button aria-label="工具"><svg class="ic"><use href="#tool"/></svg></button></div>
          <div><button aria-label="渲染"><svg class="ic"><use href="#render"/></svg></button><button aria-label="输出"><svg class="ic"><use href="#output"/></svg></button><button aria-label="视图层"><svg class="ic"><use href="#layers"/></svg></button><button aria-label="场景"><svg class="ic"><use href="#scene"/></svg></button><button class="red" aria-label="世界"><svg class="ic"><use href="#world"/></svg></button></div>
          <div><button class="white" aria-label="集合"><svg class="ic"><use href="#box-line"/></svg></button></div>
          <div><button class="on" aria-label="物体"><svg class="ic"><use href="#object"/></svg></button><button class="blue" aria-label="修改器"><svg class="ic"><use href="#wrench"/></svg></button><button class="blue" aria-label="粒子"><svg class="ic"><use href="#particles"/></svg></button><button class="blue" aria-label="物理"><svg class="ic"><use href="#physics"/></svg></button><button class="blue" aria-label="约束"><svg class="ic"><use href="#constraint"/></svg></button><button class="green" aria-label="数据"><svg class="ic"><use href="#mesh"/></svg></button><button class="red" aria-label="材质"><svg class="ic"><use href="#material"/></svg></button></div>
          <svg class="dn more-tabs"><use href="#down"/></svg>
        </nav>
        <div class="sheet">
          <div class="crumb"><svg class="ic"><use href="#object"/></svg><span>Cube</span><button class="ghost" aria-label="固定"><svg class="ic mute"><use href="#pin"/></svg></button></div>
          <div class="grp ident"><button class="drop" aria-label="物体"><svg class="ic"><use href="#object"/></svg><svg class="dn"><use href="#down"/></svg></button><input class="name" aria-label="物体名称" value="Cube"></div>
          <div class="panels">
            <section class="panel open">
              <h2><svg class="fold"><use href="#fold-open"/></svg>变换<svg class="grip"><use href="#grip"/></svg></h2>
              <div class="fields">
                <div class="trio">
                  <label for="lx">位置 X</label><input id="lx" value="2.4075"><svg class="lock"><use href="#lock"/></svg><i></i>
                  <label for="ly">Y</label><input id="ly" value="5.2878"><svg class="lock"><use href="#lock"/></svg><i></i>
                  <label for="lz">Z</label><input id="lz" value="2.6985"><svg class="lock"><use href="#lock"/></svg><i></i>
                </div>
                <div class="trio">
                  <label for="rx">旋转 X</label><input id="rx" value="0°"><svg class="lock"><use href="#lock"/></svg><i></i>
                  <label for="ry">Y</label><input id="ry" value="0°"><svg class="lock"><use href="#lock"/></svg><i></i>
                  <label for="rz">Z</label><input id="rz" value="0°"><svg class="lock"><use href="#lock"/></svg><i></i>
                </div>
                <div class="trio single">
                  <label for="rm">模式</label><span class="pick"><select id="rm"><option>XYZ ...</option></select><svg class="dn"><use href="#down"/></svg></span><span></span><i></i>
                </div>
                <div class="trio">
                  <label for="sx">缩放 X</label><input id="sx" value="1.000"><svg class="lock"><use href="#lock"/></svg><i></i>
                  <label for="sy">Y</label><input id="sy" value="1.000"><svg class="lock"><use href="#lock"/></svg><i></i>
                  <label for="sz">Z</label><input id="sz" value="1.000"><svg class="lock"><use href="#lock"/></svg><i></i>
                </div>
              </div>
              <h3><svg class="fold"><use href="#fold-shut"/></svg>增量变换</h3>
            </section>
            <section class="panel"><h2><svg class="fold"><use href="#fold-shut"/></svg>关系<svg class="grip"><use href="#grip"/></svg></h2></section>
            <section class="panel"><h2><svg class="fold"><use href="#fold-shut"/></svg>集合<svg class="grip"><use href="#grip"/></svg></h2></section>
            <section class="panel"><h2><svg class="fold"><use href="#fold-shut"/></svg>实例化<svg class="grip"><use href="#grip"/></svg></h2></section>
            <section class="panel"><h2><svg class="fold"><use href="#fold-shut"/></svg>运动路径<svg class="grip"><use href="#grip"/></svg></h2></section>
            <section class="panel"><h2><svg class="fold"><use href="#fold-shut"/></svg>着色方式<svg class="grip"><use href="#grip"/></svg></h2></section>
            <section class="panel"><h2><svg class="fold"><use href="#fold-shut"/></svg>可见性<svg class="grip"><use href="#grip"/></svg></h2></section>
            <section class="panel"><h2></h2></section>
          </div>
        </div>
        <i class="vscroll"></i>
      </div>
    </section>
    <i class="thumb"></i>
  </aside>
</main>

<footer class="status">
  <svg class="mouse"><use href="#mouse"/></svg><span>选择（列表）</span>
  <svg class="ic net"><use href="#offline"/></svg><i></i><span>5.0.1</span>
</footer>
<script src="scene.js"></script>
</body>
</html>
```
FILE: styles.css
```css
* { box-sizing: border-box; }
html, body { height: 100%; }
body {
  margin: 0; display: grid; grid-template-rows: 53px minmax(0, 1fr) 47px;
  background: #181818; color: #e6e6e6; overflow: hidden;
  font: 22px/28px Inter, "Noto Sans CJK SC", sans-serif;
  font-feature-settings: "calt" 0;
  text-shadow: 0 2px 2px rgba(0, 0, 0, .5);
}
button, input, select { font: inherit; font-feature-settings: inherit; color: inherit; text-shadow: inherit; background: none; border: 0; margin: 0; padding: 0; border-radius: 0; min-width: 0; outline: 0; }
input[type="search"] { appearance: none; }
p, h2, h3, ul { margin: 0; padding: 0; font-weight: 400; font-size: 22px; list-style: none; }
svg { display: block; flex: none; }
.sprite { position: absolute; width: 0; height: 0; }
.f { fill: currentColor; }
.s { fill: none; stroke: currentColor; stroke-width: 2; }
.s3 { fill: none; stroke: currentColor; stroke-width: 2.500; }
.dim { opacity: .6; }
.ic { width: 32px; height: 32px; }
.dn { width: 16px; height: 16px; }
.fold { width: 20px; height: 20px; color: #c4c4c4; }
.mute { color: #a6a6a6; }

/* shared controls */
.btn, .grp { display: flex; align-items: center; height: 39px; background: #282828; border: 2px solid #3d3d3d; border-radius: 9px; flex: none; }
.grp { gap: 2px; overflow: hidden; background: #3d3d3d; }
.grp > * { height: 100%; background: #282828; }
.cell { width: 36px; display: grid; place-items: center; }
.wide .cell { width: 38px; }
.grp .lit { background: #545454; }
.grp .on { background: #4772b3; color: #fff; }
.grp .faint { color: #5c5c5c; background: #303030; }
.drop { display: flex; align-items: center; padding: 0 5px; gap: 1px; }
.grp .drop { padding: 0 6px 0 4px; gap: 4px; }
.menus { display: flex; }
.menu { padding: 0 15px; height: 38px; }
.bar { display: flex; gap: 11px; }
.shading { gap: 12px; }
.option { padding: 0 4px 0 14px; gap: 11px; }
.search { display: flex; align-items: center; gap: 14px; width: 230px; height: 39px; padding: 0 6px; background: #1d1d1d; border: 2px solid #3d3d3d; border-radius: 9px; }
.search input { width: 100%; }
.search input::placeholder { color: #666; opacity: 1; }

/* top bar */
.topbar { display: flex; align-items: center; padding: 0 10px 1px; }
.brand { padding: 0 4px 0 0; }
.logo { width: 34px; height: 34px; color: #d9d9d9; }
.topbar > .menus { padding-right: 15px; margin-right: 15px; border-right: 2px solid #333; align-items: center; }
.spaces { display: flex; gap: 2px; color: #989898; }
.spaces button { height: 42px; padding: 0 19px; border-radius: 9px; background: #1d1d1d; }
.spaces .on { padding: 0 20px; background: #303030; color: #fff; }
.spaces .add { padding: 0 4px; color: #989898; }
.data .name, .ident .name { flex: 1; background: #1d1d1d; padding-left: 12px; }
.scene-id { width: 343px; margin-left: auto; }
.data .drop { padding-right: 4px; }
.data .ghost { background: #1d1d1d; padding-right: 8px; margin-left: -2px; }
.layer-id { width: 302px; margin-left: 12px; }
.data .cell { width: 38px; }
.grp .off { background: #282828; color: #474747; }

/* main areas */
.work { display: grid; grid-template-columns: minmax(0, 1fr) 449px; gap: 7px; padding: 0 4px; min-height: 0; }
.left, .right { display: flex; flex-direction: column; gap: 7px; min-height: 0; position: relative; }
.viewport { flex: 1; min-height: 0; position: relative; overflow: hidden; background: #3f3f3f; border: 2px solid #5e5e5e; border-radius: 12px; }
.scene { position: absolute; inset: 0; width: 100%; height: 100%; }
.vhead { position: relative; display: flex; height: 54px; padding: 4px 15px 0 16px; background: #333; }
.middle { margin: 0 auto; padding-right: 106px; }
.mode { padding: 0 6px 0 4px; gap: 11px; }
.mode .dn { margin-left: 2px; }
.mode, .orient { white-space: nowrap; }
.orient { padding: 0 4px 0 5px; gap: 8px; }
.vsub { position: relative; display: flex; justify-content: space-between; }
.notch { height: 48px; padding: 3px 18px 0 14px; background: #333; border-radius: 0 0 12px 0; }
.notch .ic { color: #c4c4c4; }
.notch .on .ic { color: #fff; }
.notch.right { padding: 3px 15px 0 17px; border-radius: 0 0 0 12px; }
.vbody { position: relative; display: flex; align-items: flex-start; padding: 15px 16px 0; }
.tools { display: grid; gap: 15px; margin-top: 3px; width: 77px; }
.set { display: grid; gap: 2px; border-radius: 8px; overflow: hidden; }
.set button { position: relative; height: 67px; padding-right: 3px; background: #282828; display: grid; place-items: center; }
.set .on { background: #4772b3; }
.set svg { width: 48px; height: 48px; }
.more::after { content: ""; position: absolute; right: 4px; bottom: 4px; border: 4px solid; border-color: transparent #999 #999 transparent; }
.info { margin-left: 37px; line-height: 36px; color: #fff; font-weight: 500; text-shadow: 0 0 3px #000, 0 1px 2px #000; }
.nav { margin: 3px 0 0 auto; display: flex; flex-direction: column; align-items: flex-end; gap: 4px; }
.nav button { width: 56px; height: 56px; border-radius: 50%; background: #2f2f2f; display: grid; place-items: center; color: #d6d6d6; }
.orbit { width: 164px; height: 160px; overflow: visible; }
.orbit text { font: 600 21px Inter, sans-serif; text-anchor: middle; text-shadow: none; }
.side { position: absolute; right: 0; top: 145px; width: 17px; height: 36px; background: #333; border-radius: 6px 0 0 6px; color: #b0b0b0; }
.side svg { width: 16px; height: 24px; }

/* snap pie menu, placed around the pointer on the canvas */
.pie button { position: absolute; height: 60px; width: 302px; display: flex; align-items: center; padding: 0 8px 0 18px; background: #181818; border: 2px solid #242424; border-radius: 9px; color: #d9d9d9; white-space: pre; }
.pie .ic { margin-right: 12px; }
.pie kbd { font: inherit; margin-left: auto; color: #7d7d7d; }
.pie .title { position: absolute; left: 652px; top: 324px; color: #7c7c7c; }
.pie .p8 { left: 534px; top: 139px; width: 280px; }
.pie .p7 { left: 141px; top: 227px; width: 392px; }
.pie .p9 { left: 816px; top: 227px; }
.pie .p4 { left: 194px; top: 369px; width: 280px; }
.pie .p6 { left: 874px; top: 369px; }
.pie .p1 { left: 231px; top: 510px; }
.pie .p3 { left: 816px; top: 510px; width: 280px; }
.pie .p2 { left: 534px; top: 599px; width: 280px; }
.note { position: absolute; left: 1194px; top: 666px; font-size: 40px; line-height: 52px; color: #ff2600; text-shadow: none; white-space: nowrap; }

/* timeline */
.timeline { border: 2px solid #333; border-radius: 12px; overflow: hidden; background: #1d1d1d; }
.thead { display: flex; gap: 11px; height: 50px; padding: 4px 14px 0 15px; background: #303030; }
.thead .menus { margin: 0 -1px; }
.gap-a { flex: 390; } .gap-b { flex: 99; } .gap-c { flex: 9; }
.frame { width: 146px; text-align: center; }
.grp .frame, .grp .range { background: #545454; }
.range { display: flex; align-items: center; width: 173px; padding: 0 27px 0 31px; }
.range input { flex: 1; width: 40px; text-align: right; }
.ruler { height: 41px; padding: 3px 14px 0 21px; }
.ticks { position: relative; display: grid; grid-template-columns: repeat(22, 1fr); text-align: center; color: #808080; line-height: 40px; text-shadow: none; }
.head { position: absolute; top: 0; width: 44px; margin-left: -22px; height: 38px; background: #4772b3; border-radius: 7px; color: #fff; font-weight: 500; }

/* outliner */
.outliner { position: relative; height: 247px; flex: none; overflow: hidden; background: #282828; border: 2px solid #333; border-radius: 12px; }
.ohead { display: flex; gap: 11px; padding: 4px 15px; height: 52px; }
.ohead .search { margin-left: 21px; }
.row { display: flex; align-items: center; height: 40px; color: #ccc; }
.row:nth-child(even) { background: #2b2b2b; }
.root { padding-left: 43px; gap: 13px; }
.coll { padding-left: 49px; color: #fff; }
.item { padding-left: 89px; }
.tag { width: 38px; height: 36px; margin: 0 9px 0 10px; display: grid; place-items: center; border-radius: 8px; flex: none; }
.lined { background: #484848; border: 2px solid #6a6a6a; }
.filled { background: #5b6e98; }
.tag .ic { width: 30px; height: 30px; }
.obj { color: #c6834d; }
.geo { color: #0fb890; }
.data-ic { margin-left: 42px; }
.clip { width: 19px; height: 36px; margin-left: 38px; padding: 2px; overflow: hidden; background: #555; border-radius: 8px 0 0 8px; }
.toggles { margin-left: auto; padding-right: 23px; display: flex; align-items: center; gap: 8px; color: #e0e0e0; }
.toggles input { appearance: none; width: 20px; height: 20px; margin-right: 6px; background: #e6e6e6; border-radius: 3px; display: grid; place-items: center; }
.toggles input::before { content: ""; width: 6px; height: 11px; margin-bottom: 3px; border: solid #1d1d1d; border-width: 0 3px 3px 0; rotate: 40deg; }
.picked.picked { margin: 1px 0 1px 6px; padding-left: 81px; height: 38px; background: #334d80; border: 2px solid #5273b5; border-radius: 4px; color: #ffaf29; }
.picked .tag { height: 34px; }
.picked .toggles { padding-right: 21px; }
.picked .obj { color: #d18d58; }
.branch { position: absolute; left: 57px; top: 141px; bottom: 4px; width: 2px; background: #5a5a5a; }
.hscroll { position: absolute; left: 17px; right: 20px; bottom: 4px; height: 6px; border-radius: 3px; background: rgba(90, 90, 90, .6); }
.vscroll { position: absolute; right: 3px; top: 53px; bottom: 42px; width: 6px; border-radius: 3px; background: #434343; }
.thumb { position: absolute; right: 1px; top: 209px; width: 12px; height: 97px; padding: 43px 2px 3px; border-radius: 6px; background: #595959; }
.thumb::before { content: ""; display: block; height: 100%; border-radius: 4px; background: linear-gradient(#6fc3ff, #3d86ff); }

/* properties */
.props { flex: 1; min-height: 0; display: flex; flex-direction: column; overflow: hidden; background: #303030; border: 2px solid #333; border-radius: 12px; }
.phead { display: flex; padding: 3px 13px 0 15px; height: 50px; justify-content: space-between; flex: none; }
.phead .search { margin-left: 14px; }
.solo { width: 40px; justify-content: center; }
.pbody { flex: 1; min-height: 0; position: relative; display: flex; }
.pbody .vscroll { top: 3px; bottom: 188px; }
.tabs { width: 57px; flex: none; background: #181818; padding: 16px 0 0 4px; display: flex; flex-direction: column; gap: 16px; color: #b0b0b0; }
.tabs button { display: grid; place-items: center; width: 53px; height: 56px; background: #1d1d1d; border-radius: 10px 0 0 10px; }
.tabs .on { background: #303030; color: #e89452; }
.tabs .red { color: #b2555e; } .tabs .blue { color: #6089d8; } .tabs .green { color: #0fb890; } .tabs .white { color: #e6e6e6; }
.more-tabs { margin: 12px 18px; color: #555; }
.sheet { flex: 1; min-width: 0; padding: 18px 14px 0 16px; }
.crumb { display: flex; align-items: center; height: 36px; padding: 0 4px 0 3px; }
.crumb span { margin-left: 18px; }
.crumb .ghost { margin-left: auto; }
.ident { height: 41px; margin: 34px 0 19px; }
.ident .drop { padding: 0 6px; gap: 1px; }
.panels { display: grid; gap: 4px; }
.panel { background: #3d3d3d; border: 2px solid #464646; border-radius: 9px; }
.panel h2 { display: flex; align-items: center; height: 46px; padding: 0 14px; gap: 8px; }
.grip { width: 24px; height: 10px; margin-left: auto; color: #8a8a8a; }
.panel h3 { display: flex; align-items: center; gap: 9px; height: 44px; padding-left: 42px; }
.fields { display: grid; gap: 14px; padding: 18px 14px 21px 0; }
.panel.open h2 { height: 48px; }
.trio { display: grid; grid-template-columns: minmax(0, 1fr) 118px 42px 40px; grid-auto-rows: 38px; row-gap: 1px; align-items: center; justify-items: center; line-height: 28px; }
.trio.single { grid-auto-rows: 36px; }
.trio label { justify-self: end; padding-right: 21px; }
.trio input { width: 118px; height: 38px; background: #545454; text-align: center; }
.trio input:nth-of-type(1) { border-radius: 7px 0 0 0; }
.trio input:nth-of-type(3) { border-radius: 0 0 0 7px; }
.trio i { width: 8px; height: 8px; border-radius: 50%; background: #e6e6e6; }
.lock { width: 24px; height: 32px; color: #a6a6a6; }
.pick { position: relative; width: 118px; height: 36px; background: #282828; border-radius: 7px; }
.pick select { appearance: none; width: 100%; height: 36px; padding-left: 14px; }
.pick .dn { position: absolute; right: 4px; top: 11px; pointer-events: none; }

/* status bar */
.status { display: flex; align-items: center; padding: 0 30px 0 12px; color: #989898; }
.mouse { width: 24px; height: 34px; margin-right: 5px; }
.net { margin-left: auto; }
.status i { width: 2px; height: 26px; margin: 0 8px 0 15px; background: #808080; }
```
FILE: scene.js
```js
// Floor grid in perspective: two vanishing points on the horizon.
const HORIZON = 260;
const minor = document.getElementById('minor');
const major = document.getElementById('major');

function line(group, x1, y1, x2, y2, width) {
  const el = document.createElementNS('http://www.w3.org/2000/svg', 'line');
  el.setAttribute('x1', x1);
  el.setAttribute('y1', y1);
  el.setAttribute('x2', x2);
  el.setAttribute('y2', y2);
  el.setAttribute('stroke-width', width);
  group.append(el);
}

// Lines running along X meet at (1175, horizon).
for (let n = -90; n <= 90; n++) {
  if (n === 0) continue;
  const isMajor = n % 10 === 0;
  line(isMajor ? major : minor, 1175, HORIZON, 864 + 196.2 * n, 1309, isMajor ? 3 : 2.5);
}

// Lines running along Y meet far to the left at (-17700, horizon).
for (let t = -150; t <= 12; t++) {
  if (t === 0) continue;
  const isMajor = t % 10 === 0;
  const depth = 7934 / (19 - t);
  const slope = depth / 18560;
  line(isMajor ? major : minor, 0, HORIZON + slope * 17700, 2110, HORIZON + slope * 19810, 2);
}
```
